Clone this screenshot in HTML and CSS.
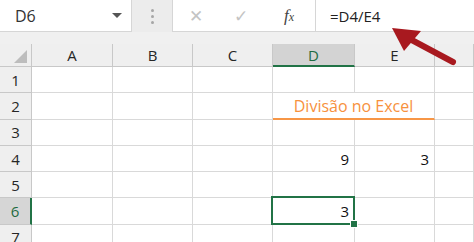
FILE: index.html
```html
<!DOCTYPE html>
<html lang="pt">
<head>
  <meta charset="UTF-8">
  <title>Divisão no Excel</title>
  <link rel="stylesheet" href="styles.css">
</head>
<body>
  <div class="window">
    <div class="formula-bar">
      <div class="name-box">
        <span>D6</span>
        <span class="drop"></span>
      </div>
      <div class="grip"><i></i><i></i><i></i></div>
      <div class="fx-box">
        <span class="btn cancel">&#x2715;</span>
        <span class="btn enter">&#x2713;</span>
        <span class="btn fx">f<small>x</small></span>
      </div>
      <div class="formula">=D4/E4</div>
    </div>

    <div class="sheet">
      <div class="hd corner"><span class="tri"></span></div>
      <div class="hd col">A</div>
      <div class="hd col">B</div>
      <div class="hd col">C</div>
      <div class="hd col active-col">D</div>
      <div class="hd col">E</div>
      <div class="hd col"></div>

      <div class="hd row">1</div>
      <div class="c"></div><div class="c"></div><div class="c"></div><div class="c"></div><div class="c"></div><div class="c"></div>

      <div class="hd row">2</div>
      <div class="c"></div><div class="c"></div><div class="c"></div>
      <div class="c title">Divisão no Excel</div>
      <div class="c"></div>

      <div class="hd row">3</div>
      <div class="c"></div><div class="c"></div><div class="c"></div><div class="c"></div><div class="c"></div><div class="c"></div>

      <div class="hd row">4</div>
      <div class="c"></div><div class="c"></div><div class="c"></div>
      <div class="c num">9</div>
      <div class="c num">3</div>
      <div class="c"></div>

      <div class="hd row">5</div>
      <div class="c"></div><div class="c"></div><div class="c"></div><div class="c"></div><div class="c"></div><div class="c"></div>

      <div class="hd row active-row">6</div>
      <div class="c"></div><div class="c"></div><div class="c"></div>
      <div class="c num selected">3</div>
      <div class="c"></div><div class="c"></div>

      <div class="hd row">7</div>
      <div class="c"></div><div class="c"></div><div class="c"></div><div class="c"></div><div class="c"></div><div class="c"></div>
    </div>

    <svg class="arrow" width="474" height="242" viewBox="0 0 474 242">
      <line x1="453" y1="62" x2="408" y2="38" stroke="#a8191f" stroke-width="6" stroke-linecap="round"/>
      <polygon points="392,28 421,31 404,51" fill="#a8191f"/>
    </svg>
  </div>
</body>
</html>
```
FILE: styles.css
```css
body { margin: 0; background: #fff; overflow: hidden; }
.window { position: relative; width: 474px; height: 242px; overflow: hidden; background: #f0f0f0; font-family: "Open Sans", "Noto Sans", sans-serif; }

.formula-bar { display: flex; height: 32px; background: #ececec; }
.name-box { width: 132px; background: #fff; border-right: 1px solid #d6d6d6; border-bottom: 1px solid #d6d6d6; display: flex; align-items: center; justify-content: space-between; padding: 0 9px 0 15px; box-sizing: border-box; font-size: 16px; color: #333; }
.drop { width: 0; height: 0; border-left: 5px solid transparent; border-right: 5px solid transparent; border-top: 5px solid #555; }
.grip { width: 40px; display: flex; flex-direction: column; align-items: center; justify-content: center; gap: 3px; }
.grip i { width: 3px; height: 3px; background: #a6a6a6; border-radius: 50%; }
.fx-box { width: 142px; background: #fff; border-left: 1px solid #d6d6d6; border-right: 1px solid #d6d6d6; border-bottom: 1px solid #d6d6d6; display: flex; align-items: center; }
.btn { color: #c4c4c4; font-size: 17px; text-align: center; }
.cancel { width: 46px; }
.enter { width: 44px; }
.fx { width: 52px; font-family: "Liberation Serif", serif; font-style: italic; color: #444; font-size: 17px; }
.fx small { font-size: 12px; }
.formula { flex: 1; background: #fff; border-bottom: 1px solid #d6d6d6; display: flex; align-items: center; padding-left: 14px; font-size: 15px; color: #222; }

.sheet { margin-top: 12px; display: grid; grid-template-columns: 32px 81px 80px 80px 82px 80px 1fr; grid-template-rows: 23px repeat(7, 26.3px); background: #fff; font-size: 15px; }
.hd { background: #efefef; border-right: 1px solid #c8c8c8; border-bottom: 1px solid #c8c8c8; display: flex; align-items: center; justify-content: center; color: #262626; box-sizing: border-box; font-size: 15px; }
.corner { position: relative; }
.tri { position: absolute; right: 4px; bottom: 3px; width: 0; height: 0; border-left: 13px solid transparent; border-bottom: 13px solid #bdbdbd; }
.active-col { background: #d3d3d3; border-bottom: 2px solid #217346; color: #1e6b41; }
.row { background: #efefef; }
.active-row { background: #d6d6d6; border-right: 2px solid #217346; color: #1e6b41; }
.c { border-right: 1px solid #d9d9d9; border-bottom: 1px solid #d9d9d9; box-sizing: border-box; display: flex; align-items: center; padding: 0 5px; color: #111; }
.num { justify-content: flex-end; }
.title { grid-column: span 2; justify-content: center; color: #f7913d; border-bottom: 2px solid #f79646; padding-top: 1px; font-size: 16px; }
.selected { position: relative; }
.selected::after { content: ""; position: absolute; left: -2px; top: -2px; right: -1px; bottom: -1px; border: 2px solid #217346; }
.selected::before { content: ""; position: absolute; right: -4px; bottom: -4px; width: 6px; height: 6px; background: #217346; border: 1px solid #fff; z-index: 1; }

.arrow { position: absolute; left: 0; top: 0; pointer-events: none; }
```
